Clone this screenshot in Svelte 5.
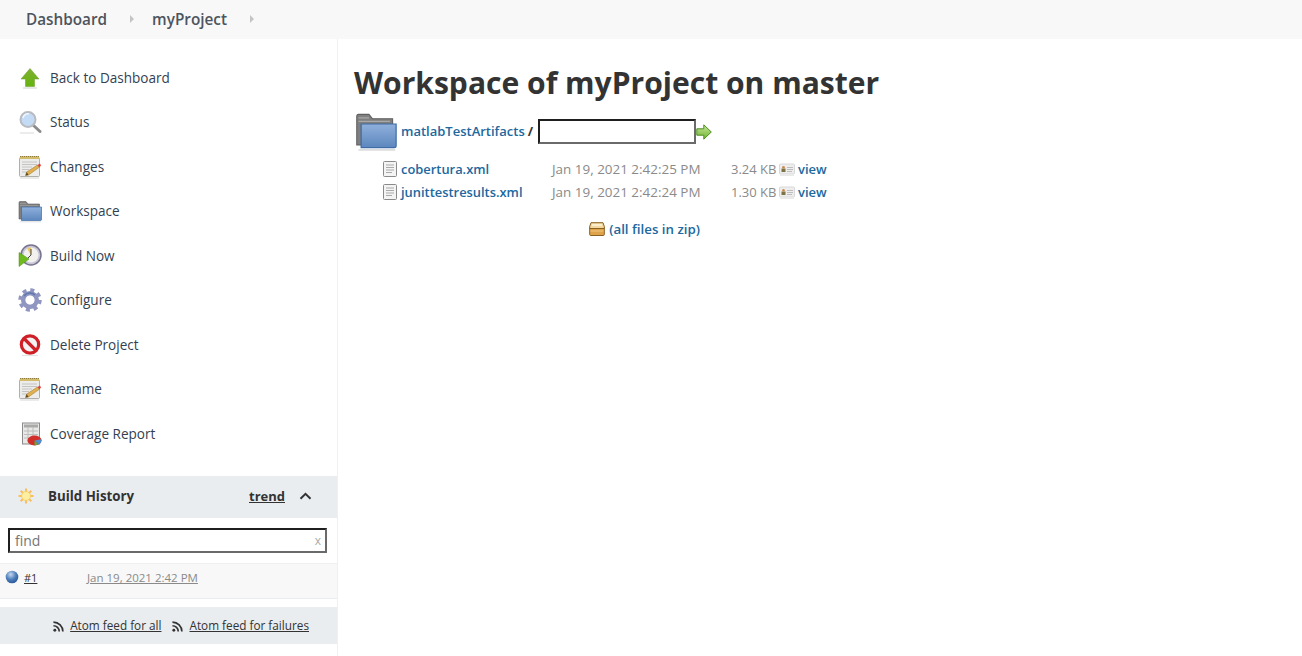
<script>
  const tasks = ['Back to Dashboard','Status','Changes','Workspace','Build Now','Configure','Delete Project','Rename','Coverage Report'];
  const files = [
    { name:'cobertura.xml', date:'Jan 19, 2021 2:42:25 PM', size:'3.24 KB' },
    { name:'junittestresults.xml', date:'Jan 19, 2021 2:42:24 PM', size:'1.30 KB' }
  ];
</script>

{#snippet notepad()}
  <svg class="ic" viewBox="0 0 24 24">
    <rect x="1.500" y="2.500" width="20" height="19" rx="1" fill="#ececea" stroke="#b0b0aa"/>
    <rect x="2" y="1" width="19" height="3" fill="#d3bb6c"/>
    <path d="M2 1.500h19" stroke="#8d7a3c" stroke-dasharray="1 1"/>
    <path d="M4 7h15M4 9.500h15M4 12h10M4 14.500h7M4 17h5" stroke="#c4c4c4"/>
    <path d="M7.500 20.500l1.200-3.500L19.500 10l1.800 2.300L10.500 20z" fill="#e2b04e" stroke="#96742a" stroke-width=".5"/>
    <path d="M7.500 20.500l1.200-3.500 1.800 3z" fill="#5a4a26"/>
    <path d="M19.500 10l2.500-1.500 1 2.300-1.700 1.500z" fill="#d8443c"/>
    <path d="M2 23h19" stroke="#e2e2e2" stroke-width="1.400"/>
  </svg>
{/snippet}

{#snippet folder(cls)}
  <svg class={cls} viewBox="0 0 24 24">
    <defs><linearGradient id="fo" x1="0" y1="0" x2="0" y2="1"><stop offset="0" stop-color="#8fb0dc"/><stop offset="1" stop-color="#5c87bd"/></linearGradient></defs>
    <path d="M1 20V3.500Q1 2.500 2 2.500h6l2 2.500h11.500v4H22V20z" fill="#7f7f7f" stroke="#5f5f5f" stroke-width=".6"/>
    <path d="M2 4.500h6M2 6.500h18" stroke="#a8a8a8" stroke-width=".6"/>
    <path d="M3.500 8H23.500V20.500Q23.500 21.500 22.500 21.500H3.500z" fill="url(#fo)" stroke="#3f6ca6" stroke-width=".7"/>
    <path d="M2 22.800h21" stroke="#ddd" stroke-width="1"/>
  </svg>
{/snippet}

{#snippet icon(i)}
  {#if i === 0}
    <svg class="ic" viewBox="0 0 24 24">
      <defs><linearGradient id="ga" x1="0" y1="0" x2="0" y2="1"><stop offset="0" stop-color="#7fb031"/><stop offset="1" stop-color="#65b30f"/></linearGradient></defs>
      <path d="M12 2.500L21 13h-4.500v7.500h-9V13H3z" fill="url(#ga)" stroke="#6b9a2a" stroke-width=".5"/>
      <path d="M5 22h14" stroke="#e0e0e0" stroke-width="1.500"/>
    </svg>
  {:else if i === 1}
    <svg class="ic" viewBox="0 0 24 24">
      <path d="M15 15l7 6.500" stroke="#8c8c8c" stroke-width="3" stroke-linecap="round"/>
      <circle cx="10" cy="9.500" r="7.500" fill="#c4dbf5" stroke="#b8bbbf" stroke-width="2"/>
      <path d="M5 8a5 5 0 0 1 6-4" stroke="#eef6ff" stroke-width="1.500" fill="none"/>
      <path d="M2 23h14" stroke="#e6e6e6" stroke-width="1.500"/>
    </svg>
  {:else if i === 2 || i === 7}
    {@render notepad()}
  {:else if i === 3}
    {@render folder('ic')}
  {:else if i === 4}
    <svg class="ic" viewBox="0 0 24 24">
      <circle cx="13" cy="11" r="10" fill="#c9c6d6" stroke="#77748f" stroke-width="1.500"/>
      <circle cx="13" cy="11" r="7.500" fill="#f2f1ee"/>
      <path d="M13 11L9 4.500A7.500 7.500 0 0 1 13 3.500z" fill="#e7c668"/>
      <path d="M13 5v6l-3 3" stroke="#444" stroke-width="1" fill="none"/>
      <path d="M1 8.500L11 15 1 22.500z" fill="#6dbb1e" stroke="#4f8f12" stroke-width=".5"/>
    </svg>
  {:else if i === 5}
    <svg class="ic" viewBox="0 0 24 24">
      <circle cx="12" cy="12" r="10" fill="none" stroke="#8f96c0" stroke-width="3.500" stroke-dasharray="4 3.850"/>
      <circle cx="12" cy="12" r="6.800" fill="none" stroke="#8f96c0" stroke-width="4.500"/>
      <path d="M6 8a7.500 7.500 0 0 1 11-1" fill="none" stroke="#5f78ad" stroke-width="1.500"/>
      <circle cx="12" cy="12" r="4.300" fill="#fff"/>
    </svg>
  {:else if i === 6}
    <svg class="ic" viewBox="0 0 24 24">
      <circle cx="12" cy="11.500" r="8.700" fill="#f3f3f3" stroke="#cf2027" stroke-width="3.200"/>
      <path d="M6 5.500l12 12" stroke="#cf2027" stroke-width="3.200"/>
      <path d="M4 22.500h16" stroke="#e2e2e2" stroke-width="1.200"/>
    </svg>
  {:else}
    <svg class="ic" viewBox="0 0 24 24">
      <rect x="4.500" y="1" width="17" height="21" fill="#e8e8e6" stroke="#8b8b8b"/>
      <rect x="6" y="2.500" width="14" height="3" fill="#a9a9a9"/>
      <path d="M6 9h14M6 12.500h14M6 16h14M10 5v15M15 5v15" stroke="#bcbcbc"/>
      <ellipse cx="16.500" cy="18.500" rx="7" ry="5" fill="#d32f2a"/>
      <path d="M16.500 18.500l6.800-1.200a7 5 0 0 1-2.800 5.200z" fill="#4f8fd0"/>
      <path d="M16.500 18.500l4 4-4 1z" fill="#67a83c"/>
    </svg>
  {/if}
{/snippet}

{#snippet doc()}
  <svg class="doc" viewBox="0 0 14 16">
    <rect x=".5" y=".5" width="13" height="15" rx="1" fill="#f4f4f4" stroke="#8a8a8a"/>
    <path d="M3 4h8M3 6.500h8M3 9h8M3 11.500h6" stroke="#aaa"/>
  </svg>
{/snippet}

{#snippet card()}
  <svg class="card" viewBox="0 0 16 14">
    <rect x=".5" y="2" width="15" height="10" rx="1" fill="#eeeeee" stroke="#d8d8d8"/>
    <rect x="2.500" y="6.500" width="4" height="3.500" fill="#7d7344"/>
    <circle cx="4.500" cy="5.300" r="1.300" fill="#c98a4a"/>
    <path d="M8 5.500h6M8 7.500h6M8 9.500h5" stroke="#bdbdbd"/>
    <path d="M1 13.300h14" stroke="#e5e5e5"/>
  </svg>
{/snippet}

{#snippet rss()}
  <svg class="rss" viewBox="0 0 12 12">
    <circle cx="2" cy="10" r="1.600" fill="#333"/>
    <path d="M.5 5.200a6.300 6.300 0 0 1 6.300 6.300M.5 1.200a10.300 10.300 0 0 1 10.300 10.300" fill="none" stroke="#333" stroke-width="1.800"/>
  </svg>
{/snippet}

<div class="page">
  <header class="crumbs">
    <a href="#d">Dashboard</a><span class="tri"></span>
    <a href="#p">myProject</a><span class="tri"></span>
  </header>
  <div class="body">
    <aside class="side">
      <nav class="tasks">
        {#each tasks as t, i}
          <a class="task" href="#t">{@render icon(i)}<span>{t}</span></a>
        {/each}
      </nav>
      <section class="hist">
        <div class="hist-head">
          <svg class="sun" viewBox="0 0 16 16">
            <g stroke="#f8bf5c" stroke-width="2">
              <path d="M8 .5v15M.5 8h15M2.700 2.700l10.600 10.600M13.300 2.700L2.700 13.300"/>
            </g>
            <circle cx="8" cy="8" r="4.500" fill="#fdeea0" stroke="#f6c860" stroke-width=".8"/>
          </svg>
          <b class="ht">Build History</b>
          <a class="trend" href="#t">trend</a>
          <svg class="chev" viewBox="0 0 12 8"><path d="M1 6.800l5-5 5 5" fill="none" stroke="#333" stroke-width="2"/></svg>
        </div>
        <div class="find">
          <div class="find-box"><span>find</span><i>x</i></div>
        </div>
        <div class="row">
          <svg class="ball" viewBox="0 0 14 14">
            <defs><radialGradient id="b" cx=".4" cy=".3" r=".8"><stop offset="0" stop-color="#c5d8ef"/><stop offset=".5" stop-color="#4f7fbc"/><stop offset="1" stop-color="#1f4f8f"/></radialGradient></defs>
            <circle cx="7" cy="7" r="6.300" fill="url(#b)"/>
          </svg>
          <a class="num" href="#1">#1</a>
          <a class="when" href="#w">Jan 19, 2021 2:42 PM</a>
        </div>
        <div class="feeds">
          {@render rss()}<a href="#a">Atom feed for all</a>
          {@render rss()}<a href="#f">Atom feed for failures</a>
        </div>
      </section>
    </aside>
    <main class="main">
      <h1>Workspace of myProject on master</h1>
      <div class="path">
        {@render folder('big')}
        <a href="#m">matlabTestArtifacts</a>
        <b>/</b>
        <div class="pathbox"></div>
        <svg class="go" viewBox="0 0 16 16">
          <defs><linearGradient id="gg" x1="0" y1="0" x2="0" y2="1"><stop offset="0" stop-color="#c6e59a"/><stop offset="1" stop-color="#6fb62e"/></linearGradient></defs>
          <path d="M.8 4.800h7V.8L15.300 8 7.800 15.200v-4h-7z" fill="url(#gg)" stroke="#4f8f1f"/>
        </svg>
      </div>
      <div class="files">
        {#each files as f}
          {@render doc()}
          <a class="fn" href="#f">{f.name}</a>
          <span class="dt">{f.date}</span>
          <span class="dt sz">{f.size}</span>
          <span class="vw">{@render card()}<a href="#v">view</a></span>
        {/each}
      </div>
      <div class="zip">
        <svg class="box" viewBox="0 0 16 14">
          <rect x=".7" y="4.500" width="14.600" height="9" rx="1" fill="#dfa44a" stroke="#8a5f22"/>
          <path d="M2 .7h12l1.300 3.800v2H.7v-2z" fill="#f3d9a0" stroke="#8a5f22"/>
          <rect x="3" y="2" width="10" height="2" fill="#fbeecd"/>
          <path d="M1.500 9h13" stroke="#f0c67e"/>
        </svg>
        <a href="#z">(all files in zip)</a>
      </div>
    </main>
  </div>
</div>

<style>
  :global(body) { margin: 0; background: #fff; }
  .page { font-family: "Open Sans", "Noto Sans", sans-serif; font-size: 13px; color: #333; height: 656px; overflow: hidden; display: flex; flex-direction: column; }
  a { color: inherit; }

  .crumbs { height: 39px; box-sizing: border-box; padding-bottom: 1px; background: #f8f8f8; display: flex; align-items: center; padding-left: 26px; flex: none; }
  .crumbs a { font-weight: 600; font-size: 15.300px; color: #4d545d; text-decoration: none; }
  .tri { width: 0; height: 0; border-left: 4px solid #c4c4c4; border-top: 4px solid transparent; border-bottom: 4px solid transparent; margin: 0 18px 0 23px; }

  .body { flex: 1; display: flex; min-height: 0; }
  .side { width: 337px; border-right: 1px solid #f0f0f0; flex: none; }
  .tasks { display: flex; flex-direction: column; padding-top: 16.600px; height: 420.400px; }
  .task { display: flex; align-items: center; height: 44.500px; text-decoration: none; color: #333f50; font-size: 13.550px; flex: none; }
  .ic { width: 24px; height: 24px; margin: 0 8px 0 18px; flex: none; }
  .hist-head { height: 42px; background: #e9edf0; display: flex; align-items: center; padding-bottom: 2px; box-sizing: border-box; }
  .sun { width: 16px; height: 16px; margin: 0 14px 0 18px; }
  .ht { font-weight: 700; font-size: 13.300px; color: #333; flex: 1; }
  .trend { font-weight: 700; font-size: 13px; color: #333; }
  .chev { width: 13px; height: 8px; margin: 0 25px 0 14px; }
  .find { padding: 10px 10px 10px 8px; height: 25px; }
  .find-box { height: 25px; box-sizing: border-box; border: 2px solid; border-color: #1f1f1f #6a6a6a #6a6a6a #1f1f1f; display: flex; justify-content: space-between; align-items: center; padding: 0 4px 0 5px; color: #757575; font-size: 14px; }
  .find-box i { font-style: normal; color: #aaa; font-size: 12px; }
  .row { background: #f8f8f8; border-top: 1px solid #eef0f2; border-bottom: 1px solid #e9edf0; display: flex; align-items: center; font-size: 11.500px; padding-bottom: 7px; height: 27px; }
  .ball { width: 14px; height: 14px; margin-left: 5px; }
  .num { margin-left: 5px; color: #333; width: 63px; font-size: 11px; }
  .when { color: #8a8a8a; }
  .feeds { margin-top: 8px; height: 37px; background: #e9edf0; display: flex; align-items: center; justify-content: flex-end; padding-right: 28px; font-size: 11.750px; }
  .feeds a { color: #333; }
  .rss { width: 11px; height: 11px; margin: 2px 6px 0 11px; }

  .main { flex: 1; padding-left: 16px; color: #333; }
  h1 { margin: 24px 0 0; font-size: 30.050px; line-height: 40px; font-weight: 700; color: #333; }
  .path { display: flex; align-items: center; height: 40px; margin-top: 8px; font-weight: 600; font-size: 13px; }
  .path a, .files a, .zip a { color: #20689e; text-decoration: none; font-weight: 600; }
  .big { width: 42px; height: 42px; margin: 0 4px 0 1px; flex: none; }
  .path b { margin: 0 5px 0 3px; font-weight: 700; }
  .pathbox { width: 158px; height: 25px; box-sizing: border-box; border: 2px solid; border-color: #1f1f1f #6a6a6a #6a6a6a #1f1f1f; }
  .go { width: 16px; height: 16px; margin-top: 2px; }
  .files { display: grid; grid-template-columns: 47px 151px 179px 47px auto; grid-auto-rows: 23px; align-items: center; width: 474px; margin-top: 6px; }
  .doc { width: 14px; height: 16px; justify-self: end; margin-right: 4px; }
  .fn { font-size: 12.900px; }
  .dt { color: #8a8a8a; font-size: 13.450px; white-space: nowrap; }
  .sz { justify-self: start; font-size: 13px; }
  .vw { display: flex; align-items: center; margin-left: 1px; }
  .card { width: 16px; height: 14px; margin-right: 3px; }
  .zip { display: flex; align-items: center; justify-content: flex-end; width: 346px; margin-top: 17px; font-size: 13.300px; }
  .box { width: 16px; height: 14px; margin-right: 4px; }
</style>
